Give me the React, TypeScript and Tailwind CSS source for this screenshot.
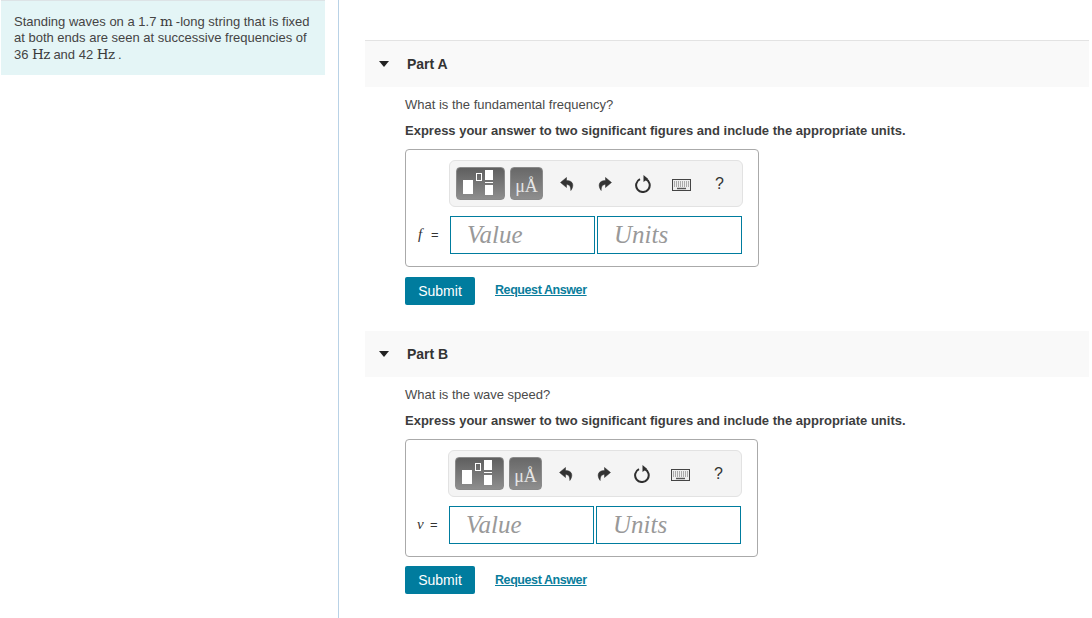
const Unit = ({ children }: { children: string }) => (
  <span className="font-['DejaVu_Serif','Liberation_Serif',serif] text-[13.5px] text-[#3a3a3a] tracking-[-0.6px]">{children}</span>
);

const TemplatesButton = () => (
  <div className="w-[49px] h-[33px] shrink-0 rounded-[4px] border border-[#8a8a8a] bg-gradient-to-b from-[#5f5f5f] to-[#8e8e8e] relative">
    <svg width="47" height="31" viewBox="0 0 47 31" className="absolute inset-0">
      <rect x="6" y="12" width="10" height="14" fill="#fff" />
      <rect x="19.5" y="5.5" width="5" height="7" fill="none" stroke="#fff" />
      <rect x="28" y="2" width="8" height="10" fill="#fff" />
      <rect x="28" y="14" width="8" height="1" fill="#fff" />
      <rect x="28" y="17" width="8" height="10" fill="#fff" />
    </svg>
  </div>
);

const UnitsButton = () => (
  <div className="w-[33px] h-[33px] shrink-0 ml-[5px] rounded-[4px] border border-[#8a8a8a] bg-gradient-to-b from-[#686868] to-[#8e8e8e] flex items-center justify-center pt-[5px] text-[#e6e6e6] font-['Liberation_Serif',serif] text-[18px] leading-none">
    μÅ
  </div>
);

const Undo = ({ flip }: { flip?: boolean }) => (
  <svg width="14" height="14" viewBox="0 0 14 14" className={flip ? "-scale-x-100" : ""}>
    <path d="M6.5 0.5 L0.5 5.5 L6.5 10.5 L6.5 7.5 C9.5 7.5 10.8 9.5 10.8 13.5 C14 9.5 14 3.5 6.5 3.5 Z" fill="#333" stroke="#333" strokeWidth="0.5" />
  </svg>
);

const Reset = () => (
  <svg width="17" height="18" viewBox="0 0 17 18">
    <path d="M10.6 4 A6.8 6.8 0 1 1 5 4.1" fill="none" stroke="#2f2f2f" strokeWidth="2" />
    <path d="M8.5 0 L13 3.8 L8.5 7 Z" fill="#2f2f2f" />
  </svg>
);

const Keyboard = () => (
  <svg width="19" height="12" viewBox="0 0 19 12">
    <rect x="0.5" y="0.5" width="18" height="11" fill="#eeeeee" stroke="#444" />
    <path d="M2 3 H17 M2 5 H17 M2 7 H17" stroke="#666" strokeDasharray="1 1" />
    <path d="M5 9.5 H14" stroke="#555" strokeWidth="1.4" />
  </svg>
);

const PartBlock = ({
  name,
  question,
  symbol,
  variant,
}: {
  name: string;
  question: string;
  symbol: string;
  variant: "a" | "b";
}) => (
  <section>
    <div
      className={
        variant === "a"
          ? "h-[47px] bg-[#f9f9f9] border-t border-[#e3e3e3] flex items-center"
          : "h-[46px] bg-[#f9f9f9] flex items-center"
      }
    >
      <div className="ml-[14px] w-0 h-0 border-l-[5px] border-r-[5px] border-t-[6px] border-l-transparent border-r-transparent border-t-[#222]" />
      <h2 className="ml-[18px] text-[14px] font-bold text-[#333]">{name}</h2>
    </div>

    <div className="pl-[40px]">
      <p className="mt-[9px] h-[17px] text-[13px] leading-[17px] text-[#4a4a4a]">{question}</p>
      <p className="mt-[9px] h-[17px] text-[13px] leading-[17px] font-bold text-[#3d3d3d]">
        Express your answer to two significant figures and include the appropriate units.
      </p>

      <div
        className={
          variant === "a"
            ? "mt-[10px] w-[354px] h-[118px] border border-[#aaaaaa] rounded-[4px] pt-[10px] pl-[43px]"
            : "mt-[10px] w-[353px] h-[118px] border border-[#aaaaaa] rounded-[4px] pt-[10px] pl-[42px]"
        }
      >
        <div className="w-[294px] h-[47px] bg-[#f4f4f4] border border-[#e2e2e2] rounded-[6px] flex items-center pl-[6px]">
          <TemplatesButton />
          <UnitsButton />
          <div className="ml-[17px]">
            <Undo />
          </div>
          <div className="ml-[24px]">
            <Undo flip />
          </div>
          <div className="ml-[23px]">
            <Reset />
          </div>
          <div className="ml-[20px] mt-[2px]">
            <Keyboard />
          </div>
          <span className="ml-[24px] text-[16px] text-[#333]">?</span>
        </div>

        <div className="mt-[9px] flex items-center relative">
          <span className="absolute left-[-31px] top-[9px] text-[13px] text-[#333] flex items-center">
            <i className="w-[13px] font-['Liberation_Serif',serif] text-[15px] leading-[17px]">{symbol}</i>
            <span>=</span>
          </span>
          <div className="ml-px w-[145px] h-[38px] border border-[#007c9e] flex items-center pl-[16px] font-['Liberation_Serif',serif] italic text-[25px] text-[#999999]">
            Value
          </div>
          <div className="ml-[2px] w-[145px] h-[38px] border border-[#007c9e] flex items-center pl-[16px] font-['Liberation_Serif',serif] italic text-[25px] text-[#999999]">
            Units
          </div>
        </div>
      </div>

      <div className={variant === "a" ? "mt-[10px] flex items-center" : "mt-[9px] flex items-center"}>
        <button className="w-[70px] h-[28px] bg-[#007c9e] rounded-[2px] text-white text-[14px] font-['Liberation_Sans',sans-serif]">
          Submit
        </button>
        <a
          className={
            variant === "a"
              ? "ml-[20px] -mt-[2px] text-[12.5px] font-bold tracking-[-0.42px] text-[#0a7d9c] underline"
              : "ml-[20px] mt-0 text-[12.5px] font-bold tracking-[-0.42px] text-[#0a7d9c] underline"
          }
        >
          Request Answer
        </a>
      </div>
    </div>
  </section>
);

export default function App() {
  return (
    <div className="w-[1092px] h-[618px] bg-white flex overflow-hidden font-['Liberation_Sans',sans-serif]">
      <aside className="w-[339px] h-full border-r border-[#b9d2e6] pl-px shrink-0">
        <div className="w-[324px] h-[75px] bg-[#e4f5f6] border-t border-[#dde3e6] pl-[13px] pt-[12px] text-[13px] leading-[16px] text-[#444]">
          Standing waves on a 1.7 <Unit>m</Unit> -long string that is fixed
          <br />
          at both ends are seen at successive frequencies of
          <br />
          36 <Unit>Hz</Unit> and 42 <Unit>Hz</Unit> .
        </div>
      </aside>
      <main className="w-[724px] ml-[26px] pt-[40px] flex flex-col gap-[26px]">
        <PartBlock name="Part A" question="What is the fundamental frequency?" symbol="f" variant="a" />
        <PartBlock name="Part B" question="What is the wave speed?" symbol="v" variant="b" />
      </main>
    </div>
  );
}
